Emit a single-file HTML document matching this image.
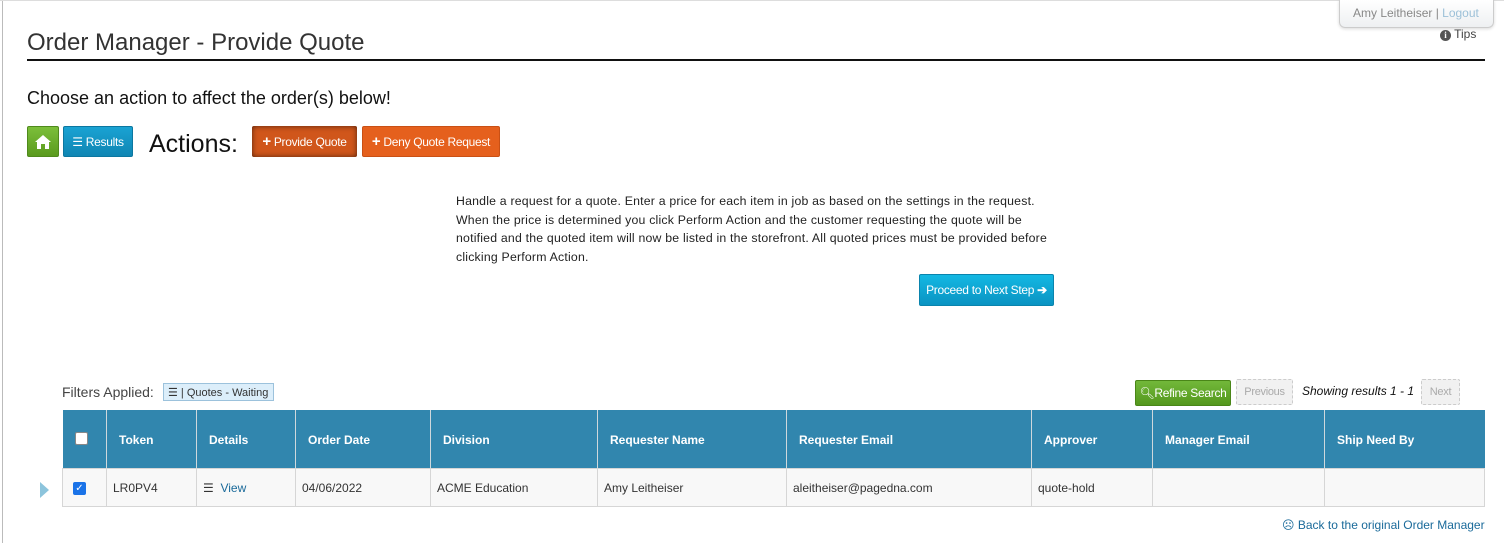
<!DOCTYPE html>
<html><head><style>
*{box-sizing:border-box}
body{margin:0;width:1504px;height:543px;background:#fff;font-family:"Liberation Sans",sans-serif;position:relative;overflow:hidden;color:#222}
.a{position:absolute}
.btn{position:absolute;color:#fff;font-size:12px;display:flex;align-items:center;justify-content:center;border-radius:2px;letter-spacing:-0.3px}
table{position:absolute;left:62px;top:410px;width:1423px;border-collapse:collapse;font-size:12px}
th{background:#3186ae;color:#fff;text-align:left;height:58px;padding-left:12px;padding-top:4px;border-left:1px solid #cfd8dc;font-weight:bold}
td{height:38px;background:#f8f8f8;border:1px solid #d6d6d6;padding-left:6px;padding-top:2px;color:#333}
</style></head><body>
<div class="a" style="left:2px;top:0;width:1px;height:543px;background:#bbb"></div>
<div class="a" style="left:0;top:0;width:1504px;height:1px;background:#ddd"></div>
<div class="a" style="left:1339px;top:0;width:155px;height:28px;border:1px solid #ccc;border-top:none;border-radius:0 0 6px 6px;background:linear-gradient(#fff,#eef0f2);box-shadow:0 1px 3px rgba(0,0,0,.15);font-size:12px;color:#888;padding:6px 0 0 13px">Amy Leitheiser | <span style="color:#9cc0d8">Logout</span></div>
<div class="a" style="left:1440px;top:27px;font-size:12px;color:#444"><span style="display:inline-block;width:11px;height:11px;border-radius:50%;background:#555;color:#fff;font-size:9px;text-align:center;line-height:11px;font-weight:bold;font-family:'Liberation Serif',serif">i</span> Tips</div>
<div class="a" style="left:27px;top:29px;font-size:24px;color:#333">Order Manager - Provide Quote</div>
<div class="a" style="left:27px;top:59px;width:1458px;height:2px;background:#111"></div>
<div class="a" style="left:27px;top:88px;font-size:18px;color:#111">Choose an action to affect the order(s) below!</div>
<div class="btn" style="left:27px;top:126px;width:32px;height:31px;background:linear-gradient(#7cbf3a,#5a9a1e);border:1px solid #4f8a1c"><svg width="18" height="16" viewBox="0 0 18 16"><path d="M9 1L1 8h2v7h4v-5h4v5h4V8h2z" fill="#fff"/></svg></div>
<div class="btn" style="left:63px;top:126px;width:70px;height:31px;background:linear-gradient(#1aa3d3,#0f86b3);border:1px solid #0c77a0">☰&nbsp;Results</div>
<div class="a" style="left:149px;top:130px;font-size:25px;color:#111">Actions:</div>
<div class="btn" style="left:252px;top:126px;width:105px;height:31px;background:#d0561b;box-shadow:inset 0 0 6px rgba(0,0,0,.6)"><b style="font-size:15px">+</b>&nbsp;Provide Quote</div>
<div class="btn" style="left:362px;top:126px;width:138px;height:31px;background:#e5601d;border:1px solid #c95015"><b style="font-size:15px">+</b>&nbsp;Deny Quote Request</div>
<div class="a" style="left:456px;top:192px;width:598px;font-size:12.3px;letter-spacing:0.2px;line-height:18.5px;color:#222">Handle a request for a quote. Enter a price for each item in job as based on the settings in the request. When the price is determined you click Perform Action and the customer requesting the quote will be notified and the quoted item will now be listed in the storefront. All quoted prices must be provided before clicking Perform Action.</div>
<div class="btn" style="left:919px;top:274px;width:135px;height:32px;background:linear-gradient(#13b8e3,#0a93c2);border:1px solid #0a84ad">Proceed to Next Step <b>&nbsp;➔</b></div>
<div class="a" style="left:62px;top:384px;font-size:14px;color:#444">Filters Applied:</div>
<div class="a" style="left:163px;top:383px;width:111px;height:18px;border:1px solid #9cc2dc;background:#dceefa;font-size:11px;color:#333;padding:2px 0 0 4px">☰ | Quotes - Waiting</div>
<div class="btn" style="left:1135px;top:380px;width:96px;height:26px;background:linear-gradient(#72b83a,#54981d);border:1px solid #4a8618">🔍︎Refine Search</div>
<div class="btn" style="left:1236px;top:379px;width:57px;height:26px;background:#f1f1f1;border:1px dashed #ccc;color:#aaa;font-size:11px">Previous</div>
<div class="a" style="left:1302px;top:384px;font-size:12px;font-style:italic;color:#111">Showing results 1 - 1</div>
<div class="btn" style="left:1421px;top:379px;width:39px;height:26px;background:#f1f1f1;border:1px dashed #ccc;color:#aaa;font-size:11px">Next</div>
<div class="a" style="left:40px;top:482px;width:0;height:0;border-left:9px solid #8cc4dc;border-top:8px solid transparent;border-bottom:8px solid transparent"></div>
<table>
<tr><th style="width:44px;border-left:none;border-radius:0"><span style="display:inline-block;width:13px;height:13px;background:#fff;border-radius:2px;border:1px solid #888"></span></th><th style="width:90px">Token</th><th style="width:99px">Details</th><th style="width:135px">Order Date</th><th style="width:167px">Division</th><th style="width:189px">Requester Name</th><th style="width:245px">Requester Email</th><th style="width:121px">Approver</th><th style="width:172px">Manager Email</th><th>Ship Need By</th></tr>
<tr><td style="padding-left:10px"><span style="display:inline-block;width:13px;height:13px;background:#1a73e8;border-radius:2px;color:#fff;font-size:10px;text-align:center;line-height:13px">✓</span></td><td>LR0PV4</td><td>☰&nbsp;&nbsp;<span style="color:#1a6a9a">View</span></td><td>04/06/2022</td><td>ACME Education</td><td>Amy Leitheiser</td><td>aleitheiser@pagedna.com</td><td>quote-hold</td><td></td><td></td></tr>
</table>
<div class="a" style="left:1282px;top:518px;font-size:12px;color:#1a6a9a">☹ Back to the original Order Manager</div>
</body></html>
